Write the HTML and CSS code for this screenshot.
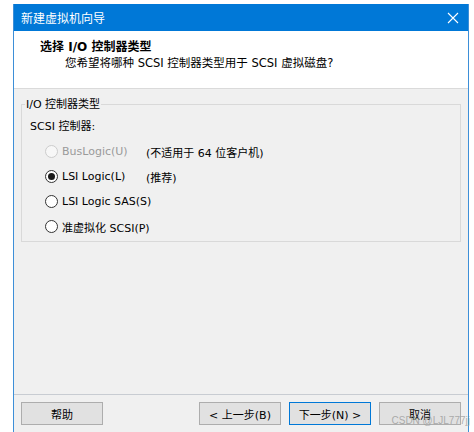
FILE: index.html
```html
<!DOCTYPE html>
<html lang="zh-CN">
<head>
<meta charset="utf-8">
<title>新建虚拟机向导</title>
<link rel="stylesheet" href="styles.css">
</head>
<body>
<div class="window">
  <div class="titlebar">
    <span class="title">新建虚拟机向导</span>
    <svg class="close" width="12" height="12" viewBox="0 0 12 12"><path d="M1 1 L11 11 M11 1 L1 11" stroke="#ffffff" stroke-width="1.1" fill="none"/></svg>
  </div>
  <div class="header">
    <div class="h-title">选择 I/O 控制器类型</div>
    <div class="h-sub">您希望将哪种 SCSI 控制器类型用于 SCSI 虚拟磁盘?</div>
  </div>
  <div class="main">
    <fieldset class="group">
      <legend>I/O 控制器类型</legend>
      <div class="group-body">
        <div class="label">SCSI 控制器:</div>
        <div class="options">
          <div class="opt disabled"><span class="radio"></span><span class="opt-name">BusLogic(U)</span><span class="opt-note">(不适用于 64 位客户机)</span></div>
          <div class="opt"><span class="radio checked"></span><span class="opt-name">LSI Logic(L)</span><span class="opt-note">(推荐)</span></div>
          <div class="opt"><span class="radio"></span><span class="opt-name">LSI Logic SAS(S)</span></div>
          <div class="opt"><span class="radio"></span><span class="opt-name">准虚拟化 SCSI(P)</span></div>
        </div>
      </div>
    </fieldset>
  </div>
  <div class="footer">
    <button class="btn">帮助</button>
    <div class="spacer"></div>
    <button class="btn">&lt; 上一步(B)</button>
    <button class="btn default">下一步(N) &gt;</button>
    <button class="btn">取消</button>
  </div>
</div>
<div class="watermark">CSDN @LJL777jj</div>
</body>
</html>
```

FILE: styles.css
```css
html, body {
  margin: 0;
  padding: 0;
  background: #ffffff;
}
body {
  position: relative;
  width: 474px;
  height: 432px;
  overflow: hidden;
  font-family: "DejaVu Sans", "Noto Sans CJK SC", sans-serif;
  font-size: 11px;
  color: #000000;
}
.window {
  margin: 4px 0 0 13px;
  width: 454px;
  height: 431px;
  border-left: 1px solid #3d8fd8;
  border-right: 1px solid #3d8fd8;
  background: #f0f0f0;
  display: flex;
  flex-direction: column;
}
.titlebar {
  height: 27px;
  flex: none;
  background: #0078d7;
  color: #ffffff;
  display: flex;
  align-items: center;
  justify-content: space-between;
  padding: 0 9px 0 7px;
  font-family: "Noto Sans CJK SC", sans-serif;
  font-size: 12px;
}
.close {
  display: block;
}
.header {
  height: 57px;
  flex: none;
  background: #ffffff;
  border-bottom: 1px solid #dadada;
  padding: 8px 0 0 26px;
  box-sizing: border-box;
  height: 58px;
}
.h-title {
  font-family: "DejaVu Sans", "Noto Sans CJK SC", sans-serif;
  font-weight: bold;
  font-size: 12px;
  line-height: 16px;
}
.h-sub {
  padding-left: 25px;
  line-height: 16px;
  font-size: 11.5px;
}
.main {
  flex: 1;
  padding: 9px 7px 0 7px;
}
.group {
  margin: 0;
  padding: 0 0 2px 0;
  border: 1px solid #d9d9d9;
  min-width: 0;
}
.group legend {
  margin-left: 3px;
  padding: 0 1px;
  line-height: 13px;
}
.group-body {
  padding: 9px 0 0 8px;
}
.label {
  line-height: 14px;
}
.options {
  padding: 5px 0 0 15px;
}
.opt {
  height: 25px;
  display: flex;
  align-items: center;
}
.radio {
  width: 11px;
  height: 11px;
  border: 1px solid #333333;
  border-radius: 50%;
  background: #ffffff;
  display: flex;
  align-items: center;
  justify-content: center;
  flex: none;
}
.radio.checked::after {
  content: "";
  width: 7px;
  height: 7px;
  border-radius: 50%;
  background: #1a1a1a;
}
.opt.disabled .radio {
  border-color: #cccccc;
  background: #f7f7f7;
}
.opt-name {
  margin-left: 4px;
  width: 84px;
  white-space: nowrap;
}
.opt.disabled .opt-name {
  color: #9a9a9a;
}
.opt-note {
  white-space: nowrap;
}
.footer {
  flex: none;
  border-top: 1px solid #c8ccd2;
  display: flex;
  align-items: flex-start;
  padding: 7px 7px 10px 7px;
  gap: 8px;
}
.spacer {
  flex: 1;
}
.btn {
  width: 82px;
  height: 23px;
  margin: 0;
  padding: 0;
  border: 1px solid #adadad;
  background: #e1e1e1;
  font-family: "DejaVu Sans", "Noto Sans CJK SC", sans-serif;
  font-size: 11px;
  color: #000000;
}
.btn.default {
  border-color: #0078d7;
}
.watermark {
  position: absolute;
  right: 4px;
  top: 415px;
  font-family: "Liberation Sans", sans-serif;
  font-size: 10px;
  color: rgba(150, 150, 150, 0.75);
}
```
